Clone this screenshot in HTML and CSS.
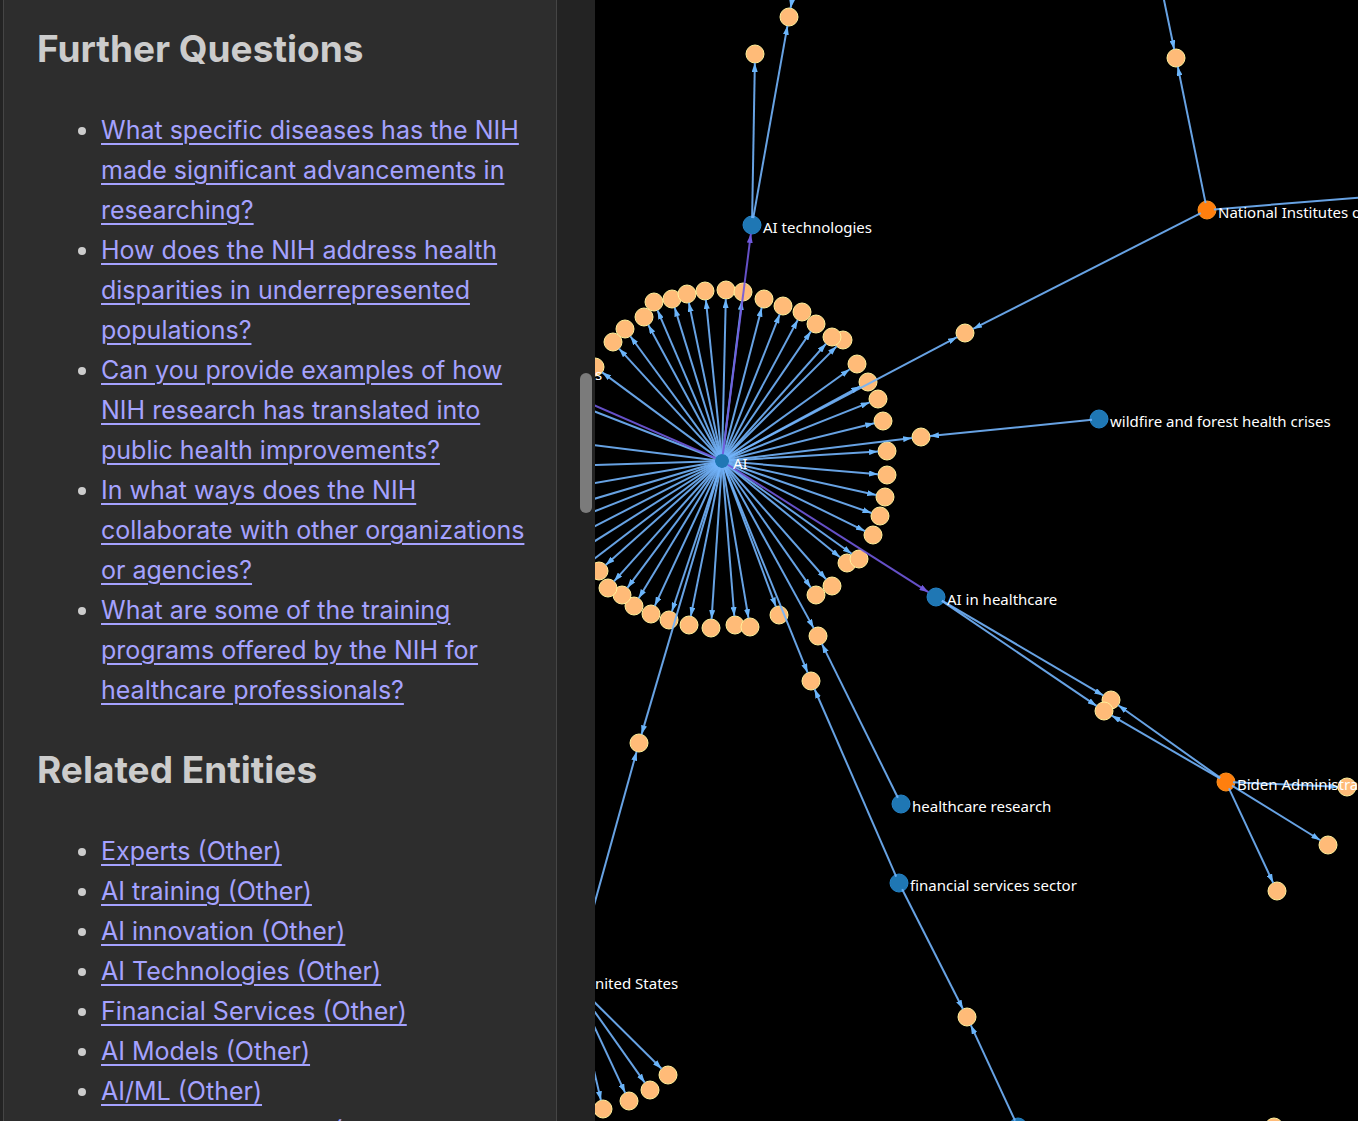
FILE: index.html
```html
<!DOCTYPE html>
<html lang="en">
<head>
<meta charset="utf-8">
<title>Knowledge Graph</title>
<link rel="stylesheet" href="styles.css">
</head>
<body>
<div class="app">
	<aside class="sidebar">
		<div class="panel">
			<h2>Further Questions</h2>
			<ul>
				<li><a href="#">What specific diseases has the NIH made significant advancements in researching?</a></li>
				<li><a href="#">How does the NIH address health disparities in underrepresented populations?</a></li>
				<li><a href="#">Can you provide examples of how NIH research has translated into public health improvements?</a></li>
				<li><a href="#">In what ways does the NIH collaborate with other organizations or agencies?</a></li>
				<li><a href="#">What are some of the training programs offered by the NIH for healthcare professionals?</a></li>
			</ul>
			<h2>Related Entities</h2>
			<ul>
				<li><a href="#">Experts (Other)</a></li>
				<li><a href="#">AI training (Other)</a></li>
				<li><a href="#">AI innovation (Other)</a></li>
				<li><a href="#">AI Technologies (Other)</a></li>
				<li><a href="#">Financial Services (Other)</a></li>
				<li><a href="#">AI Models (Other)</a></li>
				<li><a href="#">AI/ML (Other)</a></li>
				<li><a href="#">Financial Networks (Other)</a></li>
			</ul>
		</div>
		<div class="scroll-thumb"></div>
	</aside>
	<main class="graph">
		<svg id="network" role="img" aria-label="Entity graph">
			<defs>
				<marker id="arrow" viewBox="0 0 9 6" refX="9" refY="3" markerWidth="9" markerHeight="6" markerUnits="userSpaceOnUse" orient="auto"><path class="arrow" d="M0 0L9 3L0 6z"/></marker>
				<marker id="arrow-strong" viewBox="0 0 9 6" refX="9" refY="3" markerWidth="9" markerHeight="6" markerUnits="userSpaceOnUse" orient="auto"><path class="arrow-strong" d="M0 0L9 3L0 6z"/></marker>
			</defs>
			<g id="view" transform="translate(-595 0)"></g>
		</svg>
	</main>
</div>
<script src="script.js"></script>
</body>
</html>
```
FILE: styles.css
```css
* {
	box-sizing: border-box;
}

body {
	margin: 0;
	background: #000;
}

.app {
	display: flex;
	height: 100vh;
	overflow: hidden;
}

/* left side */
.sidebar {
	position: relative;
	flex: 0 0 595px;
	padding: 0 38px 0 3px;
	background: #232323;
	overflow: hidden;
}

.panel {
	padding: 21px 24px 21px 33px;
	border: 1px solid #454545;
	border-width: 0 1px;
	background: #2d2d2d;
	color: #ccc;
	font-family: Inter, "Liberation Sans", sans-serif;
}

.panel h2 {
	margin: 0 0 33px;
	font-size: 37px;
	font-weight: 700;
	line-height: 56px;
}

.panel ul {
	margin: 0 0 32px;
	padding-left: 64px;
	font-size: 25px;
	line-height: 40px;
}

.panel a {
	color: #a5a2ff;
	text-decoration-thickness: 2px;
	text-underline-offset: 4px;
}

.scroll-thumb {
	position: absolute;
	top: 373px;
	right: 3px;
	width: 12px;
	height: 140px;
	border-radius: 6px;
	background: #7b7b7b;
}

/* graph */
.graph {
	flex: 1;
	min-width: 0;
	background: #000;
}

#network {
	display: block;
	width: 100%;
	height: 100%;
}

.link {
	stroke: #72b4fc;
	stroke-width: 2;
	stroke-opacity: 0.9;
}

.link.strong {
	stroke: #7059dd;
}

.arrow {
	fill: #6bb5fb;
}

.arrow-strong {
	fill: #7059dd;
}

.node {
	fill: #ffbb78;
	stroke: #fff09a;
	stroke-width: 1;
}

.node.topic {
	fill: #1f77b4;
	stroke: #2583c8;
}

.node.org {
	fill: #ff7f0e;
	stroke: #ff9320;
}

.label {
	fill: #fff;
	font-family: "Noto Sans", sans-serif;
	font-size: 15px;
}
```
FILE: script.js
```js
var SVG = "http://www.w3.org/2000/svg";
var view = document.getElementById("view");

// named nodes: x, y, type, label
var named = {
	ai: [722, 461, "topic", "AI"],
	tech: [752, 225, "topic", "AI technologies"],
	care: [936, 597, "topic", "AI in healthcare"],
	fire: [1099, 419, "topic", "wildfire and forest health crises"],
	research: [901, 804, "topic", "healthcare research"],
	finance: [899, 883, "topic", "financial services sector"],
	nih: [1207, 210, "org", "National Institutes of Health"],
	biden: [1226, 782, "org", "Biden Administration"],
	us: [573, 981, "org", "United States"],
	south: [1018, 1127, "topic", ""]
};

// facts that only hang on AI
var ring = [
	[595, 367], [613, 342], [625, 329], [644, 317], [654, 302], [672, 299],
	[687, 294], [705, 291], [726, 290], [743, 292], [764, 299], [783, 306],
	[802, 312], [816, 324], [843, 340], [832, 337], [857, 364], [868, 382],
	[878, 399], [883, 421], [887, 451], [887, 475], [885, 497], [880, 516],
	[873, 535], [847, 563], [859, 559], [832, 586], [816, 595], [779, 615],
	[735, 625], [750, 627], [711, 628], [689, 625], [669, 620], [651, 614],
	[634, 606], [622, 595], [608, 588], [599, 571],
	[560, 398], [560, 441], [560, 466], [560, 489], [560, 509], [560, 525],
	[560, 544], [560, 563], [560, 585]
];

// facts further out, with the nodes that point at them
var outer = [
	[755, 54, "tech"],
	[789, 17, "tech"],
	[965, 333, "ai", "nih"],
	[921, 437, "ai", "fire"],
	[818, 636, "ai", "research"],
	[811, 681, "ai", "finance"],
	[639, 743, "ai", "us"],
	[1176, 58, "nih"],
	[1500, 186, "nih"],
	[1111, 700, "care", "biden"],
	[1104, 711, "care", "biden"],
	[1347, 787, "biden"],
	[1328, 845, "biden"],
	[1277, 891, "biden"],
	[967, 1017, "finance", "south"],
	[668, 1075, "us"],
	[650, 1090, "us"],
	[629, 1101, "us"],
	[603, 1109, "us"],
	[1274, 1127]
];

function add(tag, attrs) {
	var el = document.createElementNS(SVG, tag);
	for (var key in attrs) {
		el.setAttribute(key, attrs[key]);
	}
	view.appendChild(el);
	return el;
}

function drawNode(p, type) {
	add("circle", { "class": "node " + type, cx: p[0], cy: p[1], r: type == "hub topic" ? 7 : 9 });
}

// line runs from border to border, the arrow stops at the target
function drawLink(from, to, strong) {
	var dx = to[0] - from[0];
	var dy = to[1] - from[1];
	var len = Math.sqrt(dx * dx + dy * dy);
	add("line", {
		"class": strong ? "link strong" : "link",
		x1: from[0] + dx / len * 7,
		y1: from[1] + dy / len * 7,
		x2: to[0] - dx / len * 9,
		y2: to[1] - dy / len * 9,
		"marker-end": strong ? "url(#arrow-strong)" : "url(#arrow)"
	});
}

ring.concat(outer).forEach(function (p) {
	drawNode(p, "");
});
for (var id in named) {
	drawNode(named[id], id == "ai" ? "hub topic" : named[id][2]);
}

ring.forEach(function (p) {
	drawLink(named.ai, p);
});
outer.forEach(function (p) {
	p.slice(2).forEach(function (id) {
		drawLink(named[id], p);
	});
});
drawLink([800, -45], [789, 17]);
drawLink([1152, -58], [1176, 58]);
drawLink(named.ai, named.tech, true);
drawLink(named.ai, named.care, true);
drawLink(named.ai, [520, 373], true);

for (var key in named) {
	add("text", { "class": "label", x: named[key][0] + 11, y: named[key][1] + 8 }).textContent = named[key][3];
}
add("text", { "class": "label", x: 595, y: 380 }).textContent = "s";
```
